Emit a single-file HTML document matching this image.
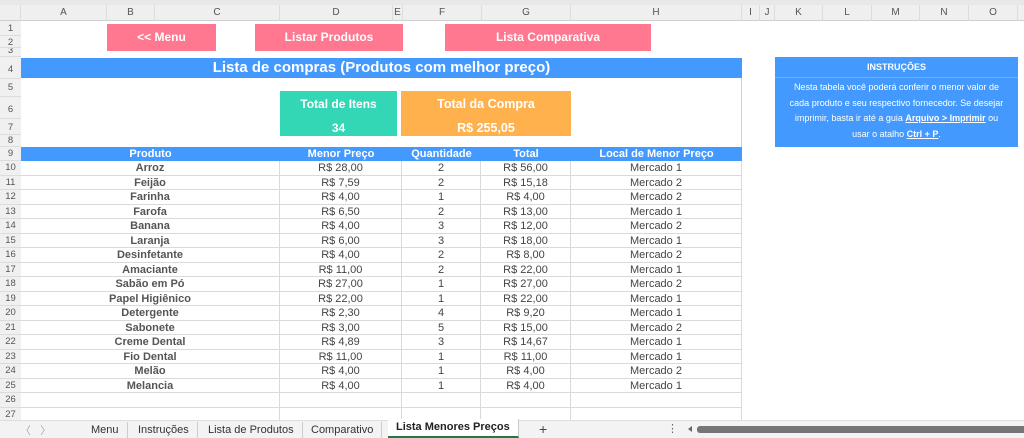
<!DOCTYPE html>
<html><head><meta charset="utf-8"><style>
*{margin:0;padding:0;box-sizing:border-box}
body{width:1024px;height:438px;overflow:hidden;background:#fff;font-family:"Liberation Sans",sans-serif;position:relative;color:#444}
.a{position:absolute}
.ch{position:absolute;top:5px;height:16px;font-size:10px;color:#555;text-align:center;line-height:16px;border-right:1px solid #dcdcdc}
.rh{position:absolute;left:0;width:21px;font-size:9.5px;color:#555;text-align:center;background:#f0f0f0;border-bottom:1px solid #dcdcdc}
.btn{position:absolute;background:#ff7890;color:#fff;font-weight:bold;font-size:12px;text-align:center;line-height:27px;top:24px;height:27px}
.r{position:absolute;left:21px;width:721px;height:14.5px;border-bottom:1px solid #dadada;font-size:11px;line-height:15px}
.r span{position:absolute;top:0;text-align:center;height:14.5px;border-right:1px solid #dadada}
.c1{left:0;width:259px;font-weight:bold;color:#555}
.c2{left:259px;width:122px}
.c3{left:381px;width:79px}
.c4{left:460px;width:90px}
.c5{left:550px;width:171px}
.tab{position:absolute;top:422px;font-size:11px;color:#333;height:16px;line-height:16px;border-right:1px solid #ccc;padding:0 8px}
</style></head><body>
<div class="a" style="left:0;top:0;width:1024px;height:5px;background:#e8e8e8"></div>
<div class="a" style="left:0;top:5px;width:1024px;height:16px;background:#efefef;border-bottom:1px solid #cfcfcf"></div>
<div class="ch" style="left:0;width:21px"></div>
<div class="ch" style="left:21px;width:86px">A</div>
<div class="ch" style="left:107px;width:48px">B</div>
<div class="ch" style="left:155px;width:125px">C</div>
<div class="ch" style="left:280px;width:113px">D</div>
<div class="ch" style="left:393px;width:10px">E</div>
<div class="ch" style="left:403px;width:79px">F</div>
<div class="ch" style="left:482px;width:89px">G</div>
<div class="ch" style="left:571px;width:171px">H</div>
<div class="ch" style="left:742px;width:18px">I</div>
<div class="ch" style="left:760px;width:15px">J</div>
<div class="ch" style="left:775px;width:48px">K</div>
<div class="ch" style="left:823px;width:49px">L</div>
<div class="ch" style="left:872px;width:48px">M</div>
<div class="ch" style="left:920px;width:49px">N</div>
<div class="ch" style="left:969px;width:49px">O</div>
<div class="a" style="left:0;top:21px;width:21px;height:401px;background:#f0f0f0;border-right:1px solid #cfcfcf"></div>
<div class="rh" style="top:21px;height:15px;line-height:15px">1</div>
<div class="rh" style="top:36px;height:12px;line-height:13px">2</div>
<div class="rh" style="top:48px;height:9px;line-height:6px;overflow:hidden">3</div>
<div class="rh" style="top:57px;height:22px;line-height:26px">4</div>
<div class="rh" style="top:79px;height:18px;line-height:18px">5</div>
<div class="rh" style="top:97px;height:22px;line-height:26px">6</div>
<div class="rh" style="top:119px;height:16px;line-height:17px">7</div>
<div class="rh" style="top:135px;height:12px;line-height:12px">8</div>
<div class="rh" style="top:147px;height:14px;line-height:14px">9</div>
<div id="rhs"></div>

<div class="btn" style="left:107px;width:109px">&lt;&lt; Menu</div>
<div class="btn" style="left:255px;width:148px">Listar Produtos</div>
<div class="btn" style="left:445px;width:206px">Lista Comparativa</div>

<div class="a" style="left:21px;top:58px;width:721px;height:20px;background:#4499ff;color:#fff;font-weight:bold;font-size:15px;text-align:center;line-height:20px">Lista de compras (Produtos com melhor preço)</div>
<div class="a" style="left:741px;top:78px;width:1px;height:69px;background:#cfcfcf"></div>
<div class="a" style="left:280px;top:91px;width:117px;height:45px;background:#33d6b5;color:#fff;font-weight:bold;font-size:12px;text-align:center;line-height:20px;padding-top:3px">Total de Itens<br><span style="line-height:28px">34</span></div>
<div class="a" style="left:401px;top:91px;width:170px;height:45px;background:#ffb14e;color:#fff;font-weight:bold;font-size:12.5px;text-align:center;line-height:24px;padding-top:1px">Total da Compra<br>R$ 255,05</div>

<div class="a" style="left:775px;top:57px;width:243px;height:90px;background:#4499ff;color:#fff;font-size:9px;text-align:center;white-space:nowrap">
<div style="height:21px;line-height:21px;font-weight:bold;border-bottom:1px solid #6ab0ff">INSTRUÇÕES</div>
<div style="line-height:15.5px;padding-top:2px">Nesta tabela você poderá conferir o menor valor de<br>cada produto e seu respectivo fornecedor. Se desejar<br>imprimir, basta ir até a guia <b><u>Arquivo &gt; Imprimir</u></b> ou<br>usar o atalho <b><u>Ctrl + P</u></b>.</div></div>

<div class="a" style="left:21px;top:147px;width:721px;height:14px;background:#4499ff;color:#fff;font-weight:bold;font-size:11px;line-height:14px">
<span class="a" style="left:0;width:259px;text-align:center">Produto</span>
<span class="a" style="left:259px;width:122px;text-align:center">Menor Preço</span>
<span class="a" style="left:381px;width:79px;text-align:center">Quantidade</span>
<span class="a" style="left:460px;width:90px;text-align:center">Total</span>
<span class="a" style="left:550px;width:171px;text-align:center">Local de Menor Preço</span></div>
<div id="rows"></div>

<div class="a" style="left:0;top:420px;width:1024px;height:18px;background:#f3f3f3;border-top:1px solid #ddd"></div>
<div class="a" style="left:20px;top:422px;font-size:11px;color:#aaa">〈&nbsp;&nbsp;&nbsp;〉</div>
<div class="tab" style="left:83px">Menu</div>
<div class="tab" style="left:130px">Instruções</div>
<div class="tab" style="left:200px">Lista de Produtos</div>
<div class="tab" style="left:303px">Comparativo</div>
<div class="tab" style="left:388px;top:419px;height:19px;background:#fff;font-weight:bold;color:#222;border-bottom:2px solid #1e7b45">Lista Menores Preços</div>
<div class="a" style="left:539px;top:421px;font-size:14px;color:#444">+</div>
<div class="a" style="left:667px;top:422px;font-size:11px;color:#666">⋮</div>
<div class="a" style="left:688px;top:426px;width:0;height:0;border:3px solid transparent;border-right:4px solid #666;border-left:0"></div>
<div class="a" style="left:697px;top:426px;width:327px;height:7px;background:#757575;border-radius:3px 0 0 3px"></div>
<script>
var d=[["Arroz","R$ 28,00","2","R$ 56,00","Mercado 1"],["Feijão","R$ 7,59","2","R$ 15,18","Mercado 2"],["Farinha","R$ 4,00","1","R$ 4,00","Mercado 2"],["Farofa","R$ 6,50","2","R$ 13,00","Mercado 1"],["Banana","R$ 4,00","3","R$ 12,00","Mercado 2"],["Laranja","R$ 6,00","3","R$ 18,00","Mercado 1"],["Desinfetante","R$ 4,00","2","R$ 8,00","Mercado 2"],["Amaciante","R$ 11,00","2","R$ 22,00","Mercado 1"],["Sabão em Pó","R$ 27,00","1","R$ 27,00","Mercado 2"],["Papel Higiênico","R$ 22,00","1","R$ 22,00","Mercado 1"],["Detergente","R$ 2,30","4","R$ 9,20","Mercado 1"],["Sabonete","R$ 3,00","5","R$ 15,00","Mercado 2"],["Creme Dental","R$ 4,89","3","R$ 14,67","Mercado 1"],["Fio Dental","R$ 11,00","1","R$ 11,00","Mercado 1"],["Melão","R$ 4,00","1","R$ 4,00","Mercado 2"],["Melancia","R$ 4,00","1","R$ 4,00","Mercado 1"],["","","","",""],["","","","",""]];
var h="",rh="";
for(var i=0;i<d.length;i++){var t=161+i*14.5;
h+='<div class="r" style="top:'+t+'px">';
for(var j=0;j<5;j++)h+='<span class="c'+(j+1)+'">'+d[i][j]+'</span>';
h+='</div>';
rh+='<div class="rh" style="top:'+t+'px;height:14.5px;line-height:14px">'+(10+i)+'</div>';}
document.getElementById("rows").innerHTML=h;document.getElementById("rhs").innerHTML=rh;
</script>
</body></html>
